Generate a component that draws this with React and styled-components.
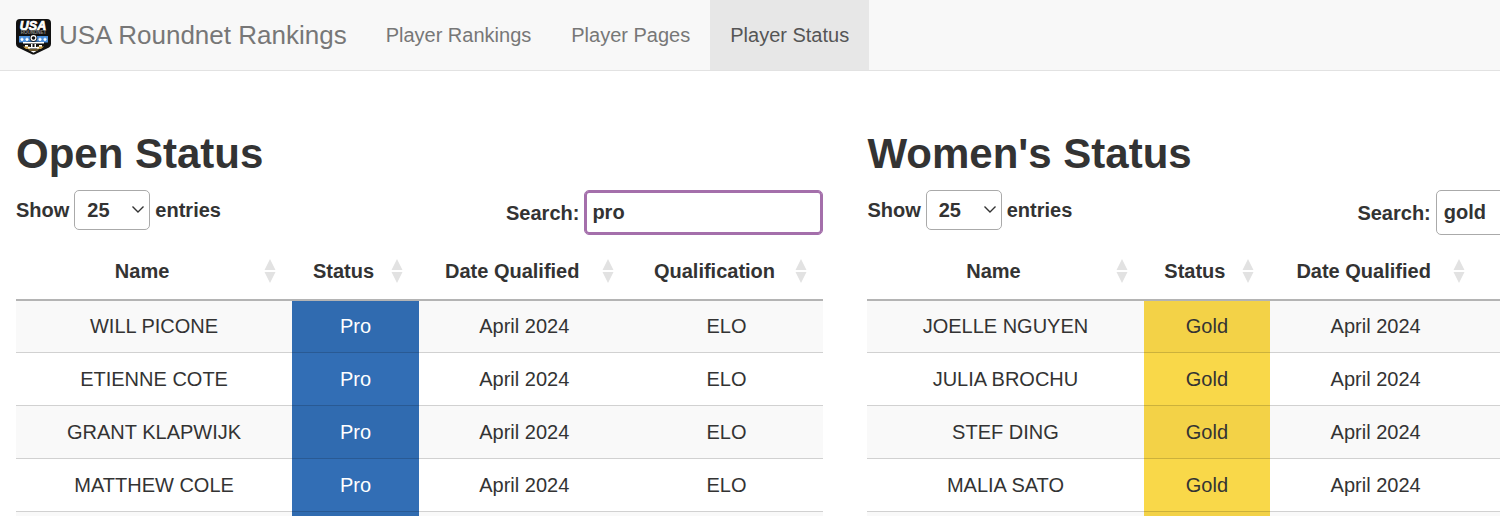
import React, { useState } from "react"
import styled, { createGlobalStyle } from "styled-components"

const GlobalStyle = createGlobalStyle`
  * {
    box-sizing: border-box;
  }

  body {
    margin: 0;
    background: #fff;
    color: #333;
    font-family: "Liberation Sans", Arial, sans-serif;
    font-size: 20px;
    line-height: 28px;
  }
`

const Page = styled.div`
  height: 100vh;
  display: flex;
  flex-direction: column;
  overflow: hidden;
`

const Navbar = styled.nav`
  flex: none;
  display: flex;
  padding: 0 16px;
  background: #f8f8f8;
  border-bottom: 1px solid #e2e2e2;
`

const Brand = styled.a`
  display: flex;
  align-items: center;
  gap: 8px;
  padding-right: 19px;
  color: #777;
  font-size: 26px;
  text-decoration: none;
  white-space: nowrap;
`

const NavLink = styled.a`
  padding: 21px 20px;
  background: ${props => (props.$active ? "#e7e7e7" : "transparent")};
  color: ${props => (props.$active ? "#555" : "#777")};
  text-decoration: none;
  white-space: nowrap;
`

const Boards = styled.main`
  flex: 1;
  min-height: 0;
  display: grid;
  grid-template-columns: repeat(2, max(720px, 55%));
  gap: 44px;
  padding: 60px 16px 0;
  overflow: hidden;
`

const Title = styled.h1`
  margin: 0 0 13px;
  font-size: 42px;
  line-height: 46px;
`

const Controls = styled.div`
  display: flex;
  justify-content: space-between;
  align-items: flex-start;
  margin-bottom: 8px;
`

const ControlLabel = styled.label`
  display: flex;
  align-items: center;
  gap: 5px;
  font-weight: bold;
`

const SelectBox = styled.span`
  position: relative;
  display: flex;

  svg {
    position: absolute;
    top: 15px;
    right: 5px;
    pointer-events: none;
  }
`

const Select = styled.select`
  appearance: none;
  width: 76px;
  height: 40px;
  padding: 0 12px;
  border: 1px solid #aaa;
  border-radius: 5px;
  background: transparent;
  color: #333;
  font: inherit;
`

const SearchInput = styled.input`
  width: 239px;
  height: 45px;
  padding: 0 7px;
  border: 1px solid ${props => (props.$active ? "#a46fab" : "#aaa")};
  border-radius: 5px;
  box-shadow: ${props => (props.$active ? "inset 0 0 0 2px #a46fab" : "none")};
  background: transparent;
  color: #333;
  font: inherit;
  outline: none;
`

const Table = styled.table`
  width: 100%;
  table-layout: fixed;
  border-collapse: separate;
  border-spacing: 0;
  text-align: center;
`

const HeadCell = styled.th`
  width: ${props => props.$width};
  padding: 0;
  border-bottom: 2px solid #b4b4b4;
`

const SortButton = styled.button`
  display: flex;
  align-items: center;
  width: 100%;
  padding: 14px 16px 14px 4px;
  border: 0;
  background: none;
  color: inherit;
  font: inherit;

  span {
    flex: 1;
  }
`

const Row = styled.tr`
  &:nth-child(odd) td {
    box-shadow: inset 0 0 0 60px rgba(0, 0, 0, 0.024);
  }

  &:first-child td {
    padding-top: 11px;
    border-top: 0;
  }
`

const statusColors = {
  Pro: { background: "#326eb5", text: "#fff" },
  Gold: { background: "#f9d849", text: "#333" },
}

const Cell = styled.td`
  height: 53px;
  padding: 12px 10px;
  border-top: 1px solid rgba(0, 0, 0, 0.18);
  background: ${props =>
    props.$status ? statusColors[props.$status].background : "transparent"};
  color: ${props => (props.$status ? statusColors[props.$status].text : "#333")};
  white-space: nowrap;

  ${Row}:first-child & {
    height: 51px;
  }
`

const columns = [
  { label: "Name", width: "34.2%" },
  { label: "Status", width: "15.7%" },
  { label: "Date Qualified", width: "26.1%" },
  { label: "Qualification", width: "24%" },
]

const openPlayers = ["WILL PICONE", "ETIENNE COTE", "GRANT KLAPWIJK", "MATTHEW COLE"]

const womenPlayers = ["JOELLE NGUYEN", "JULIA BROCHU", "STEF DING", "MALIA SATO"]

const Logo = () => (
  <svg width="35" height="40" viewBox="0 -4 35 40" aria-hidden="true">
    <path
      d="M4 0h27q4 0 4 4v21q0 2.500-2 3.500L19.500 35q-2 1-4 0L2 28.500Q0 27.500 0 25V4q0-4 4-4z"
      fill="#111"
    />
    <path d="M3 17h29v6.500h-3q-11.500-2-23 0H3z" fill="#4b8fdc" />
    <text
      x="17"
      y="10.500"
      textAnchor="middle"
      fontSize="12.500"
      fontWeight="bold"
      fontStyle="italic"
      fill="#fff"
      stroke="#fff"
      strokeWidth="0.700"
    >
      USA
    </text>
    <text x="17.500" y="15" textAnchor="middle" fontSize="4.500" fontWeight="bold" fill="#888">
      ROUNDNET
    </text>
    <g fill="#fff">
      <path d="M6 18.300l.7 1.300 1.300.4-1 .9.200 1.300-1.200-.6-1.200.6.2-1.300-1-.9 1.300-.4z" />
      <path d="M11 18.300l.7 1.300 1.300.4-1 .9.200 1.300-1.200-.6-1.200.6.2-1.300-1-.9 1.300-.4z" />
      <path d="M24 18.300l.7 1.300 1.300.4-1 .9.200 1.300-1.200-.6-1.200.6.2-1.300-1-.9 1.300-.4z" />
      <path d="M29 18.300l.7 1.300 1.300.4-1 .9.200 1.300-1.200-.6-1.200.6.2-1.300-1-.9 1.300-.4z" />
    </g>
    <circle cx="17.500" cy="19" r="3.800" fill="#111" />
    <circle cx="17.500" cy="19" r="2.400" fill="none" stroke="#fff" strokeWidth="1.200" />
    <path d="M7 23h21v1.500H7z" fill="#fff" />
    <path d="M9 26h3v2H9zM23 26h3v2h-3zM15 25h1.500v3H15zM18.500 25H20v3h-1.500z" fill="#fff" />
    <path d="M7 27.500h7V30h-4zM28 27.500h-7V30h4z" fill="#c39a45" />
    <path d="M12 28h11v1.500H12z" fill="#fff" />
    <path d="M12 30.500h11l-1.500 1h-8z" fill="#c39a45" />
    <path d="M14.500 32h6l-3 1.800z" fill="#fff" />
  </svg>
)

const SortIcon = () => (
  <svg width="12" height="24" viewBox="0 0 12 24" aria-hidden="true">
    <path d="M6 0l5.500 11H.5zM6 24L.5 13h11z" fill="#e2e2e2" />
  </svg>
)

const Chevron = () => (
  <svg width="14" height="10" viewBox="0 0 14 10" aria-hidden="true">
    <path d="M1.500 1.500L7 7l5.500-5.500" fill="none" stroke="#333" strokeWidth="1.400" />
  </svg>
)

const StatusBoard = ({ title, status, players, query, active }) => {
  const [search, setSearch] = useState(query)
  const rows = players.filter(name =>
    `${name} ${status}`.toLowerCase().includes(search.toLowerCase())
  )

  return (
    <section>
      <Title>{title}</Title>
      <Controls>
        <ControlLabel>
          Show
          <SelectBox>
            <Select defaultValue="25">
              <option>10</option>
              <option>25</option>
              <option>50</option>
              <option>100</option>
            </Select>
            <Chevron />
          </SelectBox>
          entries
        </ControlLabel>
        <ControlLabel>
          Search:
          <SearchInput
            type="text"
            value={search}
            $active={active}
            onChange={e => setSearch(e.target.value)}
          />
        </ControlLabel>
      </Controls>
      <Table>
        <thead>
          <tr>
            {columns.map(column => (
              <HeadCell key={column.label} $width={column.width}>
                <SortButton type="button">
                  <span>{column.label}</span>
                  <SortIcon />
                </SortButton>
              </HeadCell>
            ))}
          </tr>
        </thead>
        <tbody>
          {rows.map(name => (
            <Row key={name}>
              <Cell>{name}</Cell>
              <Cell $status={status}>{status}</Cell>
              <Cell>April 2024</Cell>
              <Cell>ELO</Cell>
            </Row>
          ))}
          <Row>
            <Cell />
            <Cell $status={status} />
            <Cell />
            <Cell />
          </Row>
        </tbody>
      </Table>
    </section>
  )
}

const App = () => (
  <Page>
    <GlobalStyle />
    <Navbar>
      <Brand href="#home">
        <Logo />
        USA Roundnet Rankings
      </Brand>
      <NavLink href="#rankings">Player Rankings</NavLink>
      <NavLink href="#pages">Player Pages</NavLink>
      <NavLink href="#status" $active>
        Player Status
      </NavLink>
    </Navbar>
    <Boards>
      <StatusBoard
        title="Open Status"
        status="Pro"
        players={openPlayers}
        query="pro"
        active
      />
      <StatusBoard
        title="Women's Status"
        status="Gold"
        players={womenPlayers}
        query="gold"
      />
    </Boards>
  </Page>
)

export default App
